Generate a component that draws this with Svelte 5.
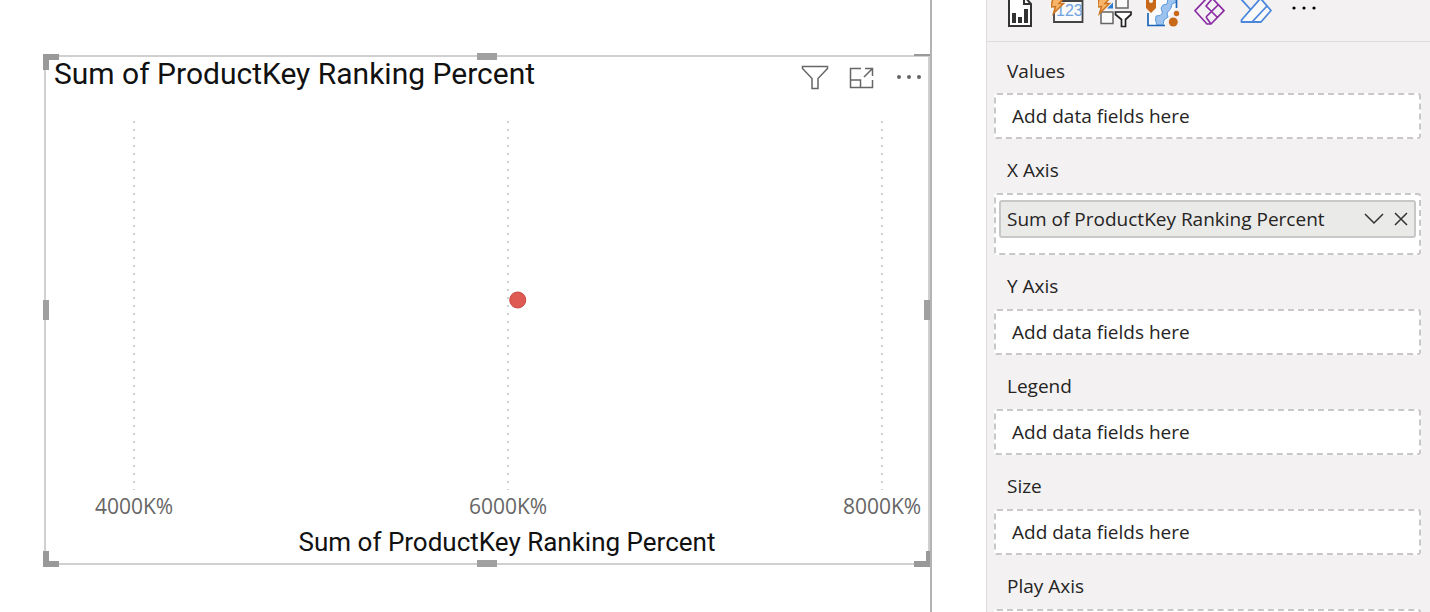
<script>
  const title = "Sum of ProductKey Ranking Percent";

  const ticks = [
    { at: 0, label: "4000K%" },
    { at: 50, label: "6000K%" },
    { at: 100, label: "8000K%" },
  ];

  const handles = ["nw", "n", "ne", "e", "se", "s", "sw", "w"];

  let wells = $state([
    { name: "Values", field: "" },
    { name: "X Axis", field: title },
    { name: "Y Axis", field: "" },
    { name: "Legend", field: "" },
    { name: "Size", field: "" },
    { name: "Play Axis", field: "" },
  ]);
</script>

<div class="page">
  <main class="canvas">
    <section class="visual">
      <header>
        <h1>{title}</h1>
        <div class="actions">
          <button aria-label="Filters">
            <svg width="28" height="28" viewBox="0 0 28 28">
              <path d="M1.5 2.5h25v2L17 14.500v10h-6v-10L1.500 4.500z" />
            </svg>
          </button>
          <button aria-label="Focus mode">
            <svg width="28" height="28" viewBox="0 0 28 28">
              <path d="M13 4.500H2.500v19h22V16M2.500 16h10v7.500M16 13l8.500-8.500M17 4.500h7.500V12" />
            </svg>
          </button>
          <button aria-label="More options">
            <svg class="dots" width="28" height="28" viewBox="0 0 28 28">
              <circle cx="4" cy="13" r="2" /><circle cx="14" cy="13" r="2" /><circle cx="24" cy="13" r="2" />
            </svg>
          </button>
        </div>
      </header>

      <svg class="plot" role="img" aria-label="Scatter chart">
        {#each ticks as tick}
          <line x1="{tick.at}%" x2="{tick.at}%" y1="1" y2="370" />
          <text x="{tick.at}%" y="394">{tick.label}</text>
        {/each}
        <circle cx="51.3%" cy="180" r="8" />
      </svg>
      <p class="axis-title">{title}</p>

      {#each handles as handle}
        <span class="handle {handle}"></span>
      {/each}
    </section>
  </main>

  <aside>
    <nav>
      <button aria-label="Paginated report">
        <svg width="36" height="28" viewBox="0 0 36 28">
          <path d="M5-4v30h22V4L20-4z" fill="#fff" stroke="#333" stroke-width="2" />
          <path d="M20-4v8h7" fill="none" stroke="#333" stroke-width="2" />
          <path d="M8 13h4v10H8zM14 17h4v6h-4zM20 9h4v14h-4z" fill="#333" />
        </svg>
      </button>
      <button aria-label="Card">
        <svg width="36" height="28" viewBox="0 0 36 28">
          <path d="M10 1h21.500v21H3V12" fill="#fafafa" stroke="#444" stroke-width="1.800" />
          <text x="5" y="16" font-size="16">123</text>
          <path class="bolt" d="M2-2L0 7l4.500-.5L2.500 13.500l10-10H8l5-5.500z" />
        </svg>
      </button>
      <button aria-label="Slicer">
        <svg width="36" height="28" viewBox="0 0 36 28">
          <path d="M3 12h12v11.500H3zM18-3h12V8H18z" fill="#fafafa" stroke="#666" stroke-width="1.500" />
          <path d="M9 8.500l6-6v6z" fill="#2b7cd3" />
          <path d="M17.500 12H33v2.500l-5.500 5v7h-4v-7l-6-5z" fill="#fff" stroke="#222" stroke-width="1.700" />
          <path class="bolt" d="M1-2L-.5 7 3.500 6.500 1.500 13.500l10-10H7l5-5.500z" />
        </svg>
      </button>
      <button aria-label="Map">
        <svg width="36" height="28" viewBox="0 0 36 28">
          <path d="M3 13v12.500h17l4-9 7.500-8V-2H11v10l-5 5z" fill="#fafafa" />
          <path d="M23-2l-1 6-4 1-2 3 1.500 5-2.500 2.500-4 .5-.5 4L12 25h6l1-5 4-3-1-4 4-5 1-4 4.500-2v-4z" fill="#9cc3ee" stroke="#5c9ade" />
          <path d="M3 13v12.500h17M31.500-2V8" fill="none" stroke="#1e66b8" stroke-width="1.700" />
          <path d="M1-3h10V8l-5 5-5-5z" fill="#c8691a" />
          <circle cx="6" cy="1" r="2" fill="#f3f2f1" />
          <circle cx="31.500" cy="13.500" r="2.700" fill="#c8691a" />
          <circle cx="28.300" cy="22" r="4.500" fill="#c8691a" />
        </svg>
      </button>
      <button aria-label="Power Apps">
        <svg width="36" height="28" viewBox="0 0 36 28">
          <path d="M14-1L3 10.700 15 24h4L32 10.700 21-1M20-1l-6 7 11 11M14 17L26 5M14 17l5 7" fill="none" stroke="#8a2da5" stroke-width="1.700" stroke-linejoin="round" />
        </svg>
      </button>
      <button aria-label="Power Automate">
        <svg width="36" height="28" viewBox="0 0 36 28">
          <path d="M2-1l9.500 10.500M21-1L2.500 20v2H22L32 10.500 22-1M13 22L28 6" fill="#fafafa" stroke="#4a86dc" stroke-width="1.800" stroke-linejoin="round" />
        </svg>
      </button>
      <button aria-label="Get more visuals">
        <svg class="more" width="36" height="28" viewBox="0 0 36 28">
          <circle cx="8" cy="8" r="1.600" /><circle cx="18" cy="8" r="1.600" /><circle cx="28" cy="8" r="1.600" />
        </svg>
      </button>
    </nav>

    {#each wells as well}
      <h2>{well.name}</h2>
      <div class="well" class:filled={well.field}>
        {#if well.field}
          <div class="field">
            <span>{well.field}</span>
            <button aria-label="Field options">
              <svg width="20" height="16" viewBox="0 0 20 16"><path d="M1 3l9 9 9-9" /></svg>
            </button>
            <button aria-label="Remove field" onclick={() => (well.field = "")}>
              <svg width="14" height="16" viewBox="0 0 14 16"><path d="M1 2l12 12M13 2L1 14" /></svg>
            </button>
          </div>
        {:else}
          <span class="empty">Add data fields here</span>
        {/if}
      </div>
    {/each}
  </aside>
</div>

<style>
  :global(body) {
    overflow: hidden;
    background: #fff;
  }

  .page {
    display: flex;
    gap: 54px;
    height: 100vh;
    font-family: "Open Sans", "Noto Sans", sans-serif;
    color: #252423;
  }

  h1,
  h2,
  p {
    margin: 0;
    font-weight: 400;
  }

  button {
    display: flex;
    padding: 0;
    border: 0;
    background: none;
    cursor: pointer;
  }

  .canvas {
    flex: 1;
    min-width: 0;
    padding: 55px 0 0 44px;
    border-right: 2px solid #b3b3b3;
  }

  .visual {
    position: relative;
    height: 506px;
    border: 2px solid #d0d0d0;
  }

  header {
    display: flex;
    justify-content: space-between;
    height: 63px;
    padding: 0 5px 0 8px;
  }

  h1,
  .axis-title {
    font-family: Roboto, sans-serif;
    color: #111;
  }

  h1 {
    font-size: 30px;
    line-height: 34px;
  }

  .actions {
    display: flex;
    gap: 19px;
    height: 28px;
    padding-top: 7px;
  }

  .actions path {
    fill: none;
    stroke: #666;
    stroke-width: 1.5;
  }

  .dots {
    fill: #666;
  }

  .plot {
    display: block;
    width: calc(100% - 134px);
    height: 400px;
    margin-left: 88px;
    overflow: visible;
  }

  .plot line {
    stroke: #d0d0d0;
    stroke-width: 2;
    stroke-dasharray: 2 6;
  }

  .plot text {
    font-size: 21px;
    fill: #666;
    text-anchor: middle;
  }

  .plot circle {
    fill: #e05a54;
    stroke: #c94640;
  }

  .axis-title {
    padding-left: 40px;
    font-size: 26px;
    line-height: 44px;
    text-align: center;
  }

  .handle {
    position: absolute;
    box-sizing: border-box;
    width: 16px;
    height: 16px;
    border: 0 solid #999;
  }

  .nw { top: -3px; left: -3px; border-width: 6px 0 0 6px; }
  .ne { top: -3px; right: -2px; border-width: 2px 0 0; }
  .sw { bottom: -4px; left: -3px; border-width: 0 0 6px 6px; }
  .se { bottom: -4px; right: -2px; border-width: 0 4px 6px 0; }

  .n,
  .s {
    left: calc(50% - 10px);
    width: 20px;
    height: 7px;
    background: #a0a0a0;
  }

  .n { top: -4px; }
  .s { bottom: -4px; }

  .e,
  .w {
    top: calc(50% - 10px);
    width: 6px;
    height: 20px;
    background: #a0a0a0;
  }

  .e { right: -2px; }
  .w { left: -3px; }

  aside {
    box-sizing: border-box;
    width: 444px;
    padding: 0 9px 0 7px;
    overflow: hidden;
    border-left: 1px solid #dedede;
    background: #f3f1f2;
    font-size: 19px;
  }

  nav {
    display: flex;
    gap: 11px;
    height: 41px;
    margin: 0 -9px 0 -7px;
    padding-left: 17px;
    border-bottom: 1px solid #dcdcdc;
  }

  nav text {
    fill: #6fa3e0;
  }

  .bolt {
    fill: #f6b56a;
    stroke: #cc7420;
    stroke-width: 1.5;
  }

  h2 {
    padding: 8px 0 0 13px;
    font-size: 19px;
    line-height: 46px;
  }

  nav + h2 {
    line-height: 43px;
  }

  .well {
    display: flex;
    box-sizing: border-box;
    align-items: center;
    height: 46px;
    border: 2px dashed #c8c8c8;
    border-radius: 3px;
    background: #fff;
  }

  .well.filled {
    align-items: flex-start;
    height: 62px;
    padding: 5px 3px;
  }

  .empty {
    padding-left: 16px;
    line-height: 26px;
  }

  .field {
    display: flex;
    box-sizing: border-box;
    flex: 1;
    align-items: center;
    gap: 10px;
    height: 38px;
    padding: 0 6px;
    border: 2px solid #c8c8c8;
    border-radius: 3px;
    background: #eaeae9;
  }

  .field span {
    flex: 1;
    white-space: nowrap;
  }

  .field path {
    fill: none;
    stroke: #333;
    stroke-width: 1.5;
  }
</style>
